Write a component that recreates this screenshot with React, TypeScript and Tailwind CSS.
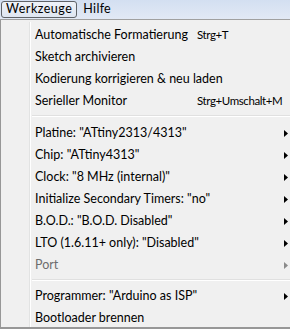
import React from "react";

interface Item {
  label: string;
  shortcut?: string;
  submenu?: boolean;
  disabled?: boolean;
}

const groups: Item[][] = [
  [
    { label: "Automatische Formatierung", shortcut: "Strg+T" },
    { label: "Sketch archivieren" },
    { label: "Kodierung korrigieren & neu laden" },
    { label: "Serieller Monitor", shortcut: "Strg+Umschalt+M" },
  ],
  [
    { label: 'Platine: "ATtiny2313/4313"', submenu: true },
    { label: 'Chip: "ATtiny4313"', submenu: true },
    { label: 'Clock: "8 MHz (internal)"', submenu: true },
    { label: 'Initialize Secondary Timers: "no"', submenu: true },
    { label: 'B.O.D.: "B.O.D. Disabled"', submenu: true },
    { label: 'LTO (1.6.11+ only): "Disabled"', submenu: true },
    { label: "Port", submenu: true, disabled: true },
  ],
  [
    { label: 'Programmer: "Arduino as ISP"', submenu: true },
    { label: "Bootloader brennen" },
  ],
];

const Arrow = ({ disabled }: { disabled?: boolean }) => (
  <svg width="4" height="7" viewBox="0 0 4 7" className="shrink-0">
    <path d="M0 0 L4 3.5 L0 7 Z" fill={disabled ? "#8a8a8a" : "#000"} />
  </svg>
);

const Row = ({ item }: { item: Item }) => (
  <div className="flex h-[22px] items-center pl-[34px] pr-[2px] pt-[2px]">
    <span className={`w-[162px] shrink-0 whitespace-nowrap ${item.disabled ? "text-[#6d6d6d]" : "text-black"}`}>
      {item.label}
    </span>
    <span className="flex-1 whitespace-nowrap text-[11.5px] tracking-[-0.4px] text-black">{item.shortcut}</span>
    {item.submenu && <Arrow disabled={item.disabled} />}
  </div>
);

const Separator = ({ h }: { h: string }) => (
  <div className={`flex ${h} flex-col justify-center pl-[31px]`}>
    <div className="h-px bg-[#e0e0e0]" />
    <div className="h-px bg-white" />
  </div>
);

export default function App() {
  return (
    <div
      className="h-[330px] w-[290px] overflow-hidden bg-white text-[12.5px]"
      style={{ fontFamily: 'Lato, "Noto Sans", sans-serif' }}
    >
      {/* Menüleiste */}
      <div className="flex h-[20px] items-center border-b border-[#a0a0a0] bg-gradient-to-b from-[#d3dff1] to-[#e2e9f5] pl-[1px]">
        <div className="flex h-[17px] items-center rounded-[3px] border border-[#5f6368] bg-gradient-to-b from-[#eef2f8] to-[#dfe6f1] px-[4px] leading-none tracking-[0.5px]">
          Werkzeuge
        </div>
        <div className="ml-[6px] leading-none tracking-[0.3px]">Hilfe</div>
      </div>

      {/* Dropdown */}
      <div className="relative h-[309px] border-b-2 border-l border-[#979797] bg-[#f0f0f0] pt-[3px]">
        <div className="absolute bottom-0 left-[28px] top-[2px] w-px bg-[#e2e3e3]" />
        <div className="absolute bottom-0 left-[29px] top-[2px] w-px bg-white" />
        {groups[0].map((it) => (
          <Row key={it.label} item={it} />
        ))}
        <Separator h="h-[10px]" />
        {groups[1].map((it) => (
          <Row key={it.label} item={it} />
        ))}
        <Separator h="h-[9px]" />
        {groups[2].map((it) => (
          <Row key={it.label} item={it} />
        ))}
      </div>
    </div>
  );
}
